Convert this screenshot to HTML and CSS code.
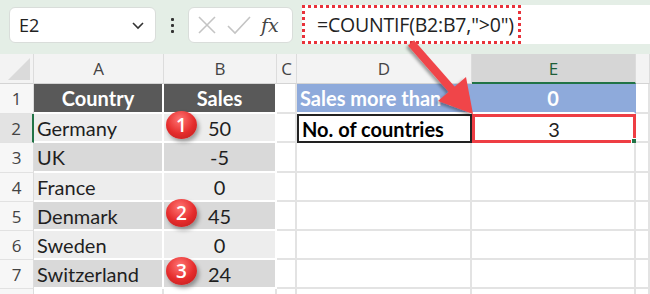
FILE: index.html
```html
<!DOCTYPE html>
<html lang="en">
<head>
    <meta charset="UTF-8">
    <title>COUNTIF example</title>
    <link rel="stylesheet" href="styles.css">
</head>
<body>
    <div class="toolbar">
        <div class="namebox">
            <span>E2</span>
            <svg class="chevron" width="14" height="10" viewBox="0 0 14 10"><path d="M2 2 L7 7 L12 2" fill="none" stroke="#333" stroke-width="1.6"/></svg>
        </div>
        <div class="grip"><i></i><i></i><i></i></div>
        <div class="fxbox">
            <svg width="20" height="20" viewBox="0 0 20 20"><path d="M2 2 L18 18 M18 2 L2 18" stroke="#c4c4c4" stroke-width="1.6"/></svg>
            <svg width="26" height="22" viewBox="0 0 26 22"><path d="M2 12 L9 19 L24 3" fill="none" stroke="#c4c4c4" stroke-width="1.6"/></svg>
            <span class="fx">fx</span>
        </div>
        <div class="formula">
            <span class="formula-text">=COUNTIF(B2:B7,"&gt;0")</span>
        </div>
    </div>

    <div class="sheet">
        <div class="hd corner"></div>
        <div class="hd col">A</div>
        <div class="hd col">B</div>
        <div class="hd col">C</div>
        <div class="hd col">D</div>
        <div class="hd col sel">E</div>
        <div class="hd col"></div>

        <div class="hd row">1</div>
        <div class="c title">Country</div>
        <div class="c title">Sales</div>
        <div class="c"></div>
        <div class="c blue left">Sales more than 0</div>
        <div class="c blue">0</div>
        <div class="c"></div>

        <div class="hd row rsel">2</div>
        <div class="c light left">Germany</div>
        <div class="c light num"><span class="badge">1</span>50</div>
        <div class="c"></div>
        <div class="c label">No. of countries</div>
        <div class="c result">3<i class="handle"></i></div>
        <div class="c"></div>

        <div class="hd row">3</div>
        <div class="c dark left">UK</div>
        <div class="c dark num">-5</div>
        <div class="c"></div><div class="c"></div><div class="c"></div><div class="c"></div>

        <div class="hd row">4</div>
        <div class="c light left">France</div>
        <div class="c light num">0</div>
        <div class="c"></div><div class="c"></div><div class="c"></div><div class="c"></div>

        <div class="hd row">5</div>
        <div class="c dark left">Denmark</div>
        <div class="c dark num"><span class="badge">2</span>45</div>
        <div class="c"></div><div class="c"></div><div class="c"></div><div class="c"></div>

        <div class="hd row">6</div>
        <div class="c light left">Sweden</div>
        <div class="c light num">0</div>
        <div class="c"></div><div class="c"></div><div class="c"></div><div class="c"></div>

        <div class="hd row">7</div>
        <div class="c dark left">Switzerland</div>
        <div class="c dark num"><span class="badge">3</span>24</div>
        <div class="c"></div><div class="c"></div><div class="c"></div><div class="c"></div>

        <div class="hd row"></div>
        <div class="c"></div><div class="c"></div><div class="c"></div><div class="c"></div><div class="c"></div><div class="c"></div>
    </div>

    <!-- callout arrow from the formula to the result cell -->
    <svg class="arrow" width="650" height="294" viewBox="0 0 650 294">
        <defs>
            <filter id="shadow" x="-20%" y="-20%" width="140%" height="140%">
                <feDropShadow dx="-2" dy="2" stdDeviation="1.5" flood-color="#000" flood-opacity="0.35"/>
            </filter>
        </defs>
        <g filter="url(#shadow)" fill="#f0454a">
            <line x1="411" y1="43" x2="454" y2="92" stroke="#f0454a" stroke-width="8"/>
            <polygon points="473,114 438,101 466,77"/>
        </g>
    </svg>
</body>
</html>
```

FILE: styles.css
```css
* {
    margin: 0;
    padding: 0;
    box-sizing: border-box;
}

body {
    width: 650px;
    height: 294px;
    overflow: hidden;
    background: #fff;
    font-family: Lato, "Liberation Sans", sans-serif;
    color: #1f1f1f;
    position: relative;
}

.toolbar {
    height: 54px;
    background: #e4eee6;
    display: flex;
    align-items: flex-start;
    padding: 7px 0 0 9px;
}

.namebox {
    width: 147px;
    height: 36px;
    background: #fff;
    border: 1px solid #d9ddda;
    border-radius: 6px;
    display: flex;
    align-items: center;
    justify-content: space-between;
    padding: 0 10px 0 9px;
    font-family: "Open Sans", sans-serif;
    font-size: 18px;
    color: #222;
}

.chevron {
    margin-top: 2px;
}

.grip {
    width: 32px;
    height: 36px;
    display: flex;
    flex-direction: column;
    align-items: center;
    justify-content: center;
    gap: 3px;
}

.grip i {
    width: 3px;
    height: 3px;
    background: #333;
    border-radius: 1px;
}

.fxbox {
    width: 105px;
    height: 36px;
    background: #fff;
    border: 1px solid #d9ddda;
    border-radius: 6px;
    display: flex;
    align-items: center;
    gap: 9px;
    padding-left: 8px;
}

.fx {
    font-family: "DejaVu Serif", "Liberation Serif", serif;
    font-style: italic;
    font-size: 19px;
    color: #444;
}

.formula {
    flex: 1;
    height: 39px;
    margin: -2px 0 0 9px;
    background: #fff;
    display: flex;
    align-items: center;
}

.formula-text {
    position: relative;
    width: 219px;
    height: 39px;
    display: flex;
    align-items: center;
    padding-left: 15px;
    font-family: "Open Sans", sans-serif;
    font-size: 19.5px;
    letter-spacing: -0.2px;
    color: #222;
}

.formula-text::before {
    content: "";
    position: absolute;
    inset: 0;
    background:
        repeating-linear-gradient(90deg, #e8323a 0 3px, transparent 3px 6px) top left / 100% 3px no-repeat,
        repeating-linear-gradient(90deg, #e8323a 0 3px, transparent 3px 6px) bottom left / 100% 3px no-repeat,
        repeating-linear-gradient(180deg, #e8323a 0 3px, transparent 3px 6px) top left / 3px 100% no-repeat,
        repeating-linear-gradient(180deg, #e8323a 0 3px, transparent 3px 6px) top right / 3px 100% no-repeat;
}

.sheet {
    display: grid;
    grid-template-columns: 34px 130px 113px 20px 175px 164px 1fr;
    grid-template-rows: 30px 30px 29px 30px 29px 29px 29px 29px 29px;
    height: 240px;
    overflow: hidden;
    font-size: 20px;
}

.hd {
    background: #f3f3f3;
    border-right: 1px solid #dcdcdc;
    border-bottom: 1px solid #d4d4d4;
    display: flex;
    align-items: center;
    justify-content: center;
    font-family: "Open Sans", sans-serif;
    font-size: 17px;
    color: #444;
}

.corner {
    position: relative;
}

.corner::after {
    content: "";
    position: absolute;
    right: 3px;
    bottom: 3px;
    border-left: 22px solid transparent;
    border-bottom: 22px solid #dadada;
}

.hd.sel {
    background: #d6d6d6;
    color: #1e5e38;
    border-bottom: 2px solid #217346;
}

.hd.row {
    background: #f7f7f7;
    border-bottom-color: #e2e2e2;
}

.hd.rsel {
    background: #e3e3e3;
    border-right: 2px solid #217346;
}

.c {
    border-right: 2px solid #e3e3e3;
    border-bottom: 2px solid #e3e3e3;
    display: flex;
    align-items: center;
    justify-content: center;
    white-space: nowrap;
    overflow: hidden;
    position: relative;
}

.c.left {
    justify-content: flex-start;
    padding-left: 3px;
}

.title {
    background: #595959;
    color: #fff;
    font-weight: bold;
    border-color: #fff;
}

.light {
    background: #ededed;
    border-color: #fff;
}

.dark {
    background: #d9d9d9;
    border-color: #fff;
}

.num {
    overflow: visible;
}

.blue {
    background: #8eaadb;
    color: #fff;
    font-weight: bold;
    border-right-color: #8eaadb;
    border-bottom-color: #fff;
}

.label {
    font-weight: bold;
    color: #000;
    border: 2px solid #222;
    padding-left: 3px;
    justify-content: flex-start;
}

.result {
    border: 3px solid #ee3e44;
    overflow: visible;
}

.handle {
    position: absolute;
    right: -4px;
    bottom: -4px;
    width: 6px;
    height: 6px;
    background: #217346;
    border: 1px solid #fff;
}

.badge {
    position: absolute;
    left: 2px;
    top: -3px;
    width: 31px;
    height: 28px;
    border-radius: 50%;
    background: radial-gradient(circle at 45% 30%, #ff7573, #e52c2c 55%, #b71c1c);
    box-shadow: 2px 3px 4px rgba(0, 0, 0, 0.35);
    color: #fff;
    font-family: "Open Sans", sans-serif;
    font-size: 19px;
    font-weight: 600;
    display: flex;
    align-items: center;
    justify-content: center;
    z-index: 2;
}

.arrow {
    position: absolute;
    left: 0;
    top: 0;
    pointer-events: none;
}
```
